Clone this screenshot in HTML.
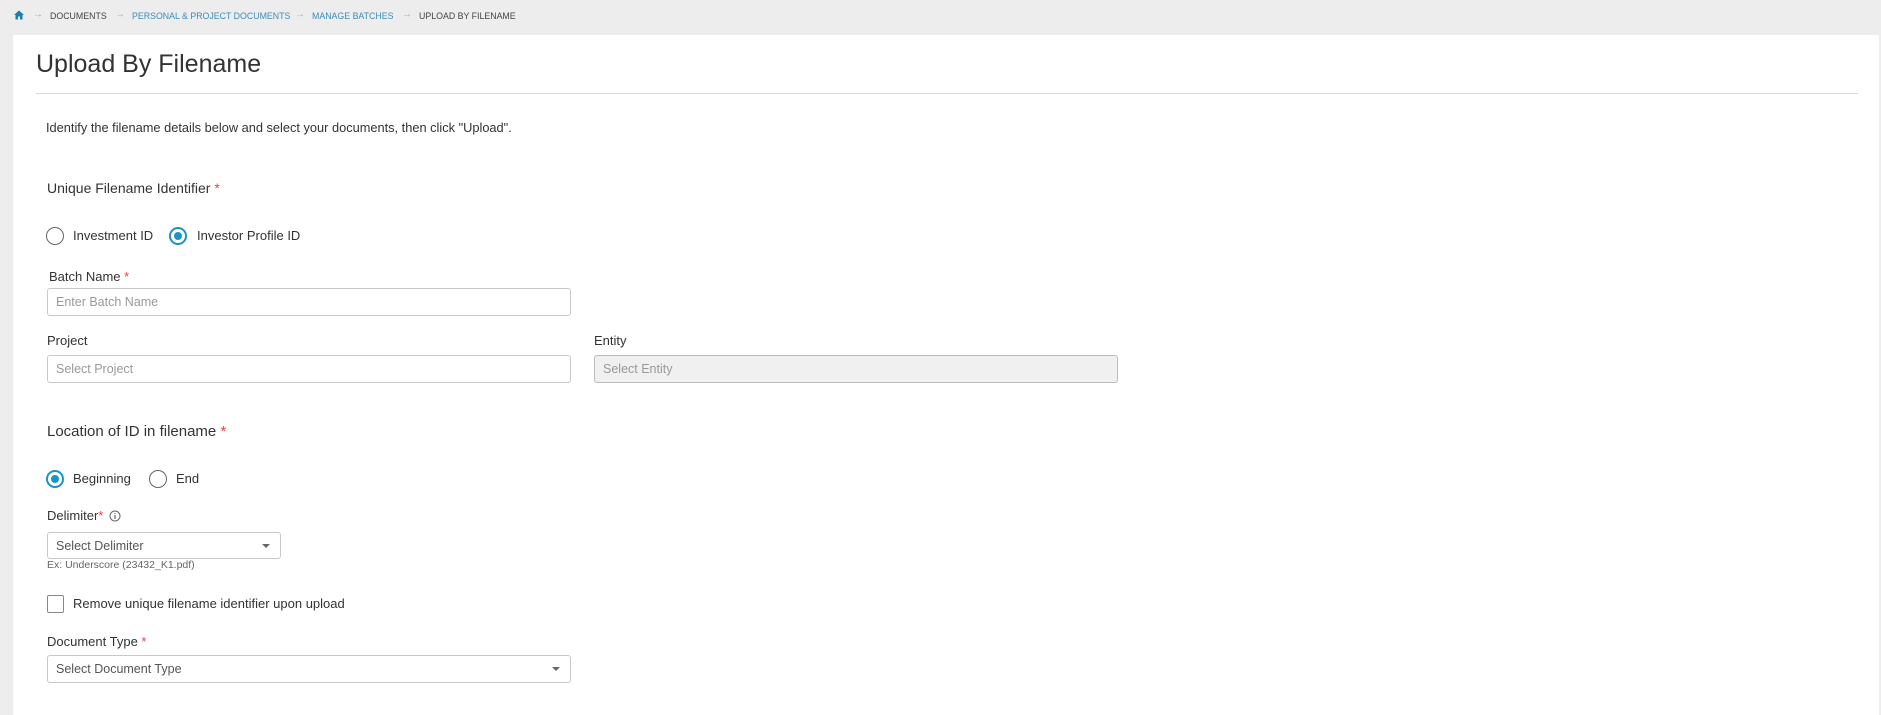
<!DOCTYPE html>
<html><head><meta charset="utf-8"><style>
*{box-sizing:border-box;margin:0;padding:0}
body{width:1881px;height:705px;background:#ededed;font-family:"Liberation Sans",sans-serif;color:#333;position:relative;overflow:hidden}
.a{position:absolute;white-space:nowrap}
.bc{font-size:8.8px;top:11px;color:#444}
.bc.l{color:#3a8db8}
.arr{font-size:10px;top:9px;color:#aaa}
.card{position:absolute;left:13px;top:35px;width:1866px;height:680px;background:#fff}
.lbl{font-size:13px;color:#333;line-height:16px}
.req{color:#e0454f}
.inp{position:absolute;border:1px solid #c8c8c8;border-radius:3px;background:#fff;font-size:12.5px;color:#999;padding-left:8px;display:flex;align-items:center}
.radio{position:absolute;width:18px;height:18px;border:1px solid #666;border-radius:50%}
.radio.on{border:2px solid #1b93c4}
.radio.on::after{content:"";position:absolute;left:3px;top:3px;width:8px;height:8px;border-radius:50%;background:#1b93c4}
.caret{position:absolute;right:10px;top:11px;width:0;height:0;border-left:4px solid transparent;border-right:4px solid transparent;border-top:4px solid #666}
</style></head><body>
<svg class="a" style="left:14px;top:10px" width="10" height="10" viewBox="0 0 10 10"><path d="M5 0.5L0 5h1.5v4.5h2.5v-3h2v3h2.5V5H10z" fill="#1b7fb0"/></svg>
<div class="a arr" style="left:33px">→</div>
<div class="a bc" style="left:50px">DOCUMENTS</div>
<div class="a arr" style="left:115px">→</div>
<div class="a bc l" style="left:132px">PERSONAL &amp; PROJECT DOCUMENTS</div>
<div class="a arr" style="left:295px">→</div>
<div class="a bc l" style="left:312px">MANAGE BATCHES</div>
<div class="a arr" style="left:402px">→</div>
<div class="a bc" style="left:419px">UPLOAD BY FILENAME</div>

<div class="card"></div>
<div class="a" style="left:36px;top:50px;font-size:25px;color:#333">Upload By Filename</div>
<div class="a" style="left:36px;top:93px;width:1822px;height:1px;background:#d8d8d8"></div>
<div class="a" style="left:46px;top:120px;font-size:12.8px;color:#333">Identify the filename details below and select your documents, then click "Upload".</div>

<div class="a lbl" style="left:47px;top:180px;font-size:14px">Unique Filename Identifier <span class="req">*</span></div>
<div class="radio" style="left:46px;top:227px"></div>
<div class="a lbl" style="left:73px;top:228px">Investment ID</div>
<div class="radio on" style="left:169px;top:227px"></div>
<div class="a lbl" style="left:197px;top:228px">Investor Profile ID</div>

<div class="a lbl" style="left:49px;top:269px">Batch Name <span class="req">*</span></div>
<div class="inp" style="left:47px;top:288px;width:524px;height:28px">Enter Batch Name</div>

<div class="a lbl" style="left:47px;top:333px">Project</div>
<div class="inp" style="left:47px;top:355px;width:524px;height:28px">Select Project</div>
<div class="a lbl" style="left:594px;top:333px">Entity</div>
<div class="inp" style="left:594px;top:355px;width:524px;height:28px;background:#f0f0f0;border-color:#bbb">Select Entity</div>

<div class="a lbl" style="left:47px;top:424px;font-size:15px">Location of ID in filename <span class="req">*</span></div>
<div class="radio on" style="left:46px;top:470px"></div>
<div class="a lbl" style="left:73px;top:471px">Beginning</div>
<div class="radio" style="left:149px;top:470px"></div>
<div class="a lbl" style="left:176px;top:471px">End</div>

<div class="a lbl" style="left:47px;top:508px">Delimiter<span class="req">*</span></div>
<svg class="a" style="left:109px;top:510px" width="12" height="12" viewBox="0 0 12 12"><circle cx="6" cy="6" r="5" fill="none" stroke="#666" stroke-width="1"/><path d="M6 5v4M6 3v1" stroke="#666" stroke-width="1.2"/></svg>
<div class="inp" style="left:47px;top:532px;width:234px;height:27px;color:#555">Select Delimiter<span class="caret"></span></div>
<div class="a" style="left:47px;top:559px;font-size:10.5px;color:#666">Ex: Underscore (23432_K1.pdf)</div>

<div class="a" style="left:47px;top:595px;width:17px;height:18px;border:1px solid #888;border-radius:2px"></div>
<div class="a lbl" style="left:73px;top:596px">Remove unique filename identifier upon upload</div>

<div class="a lbl" style="left:47px;top:634px">Document Type <span class="req">*</span></div>
<div class="inp" style="left:47px;top:655px;width:524px;height:28px;color:#555">Select Document Type<span class="caret"></span></div>
</body></html>
